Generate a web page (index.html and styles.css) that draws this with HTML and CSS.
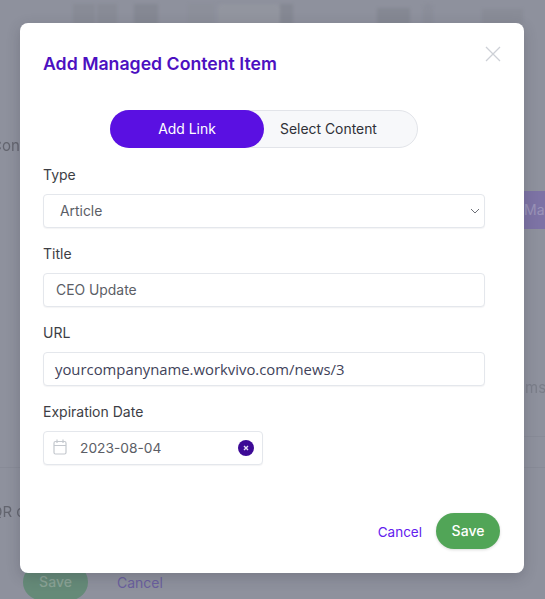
FILE: index.html
```html
<!DOCTYPE html>
<html lang="en">
<head>
<meta charset="utf-8">
<title>Add Managed Content Item</title>
<link rel="stylesheet" href="styles.css">
</head>
<body>
<div class="backdrop">
  <div class="ghost-top">
    <span class="g g1"></span><span class="g g2"></span><span class="g g3"></span><span class="g g4"></span><span class="g g5"></span><span class="g g6"></span><span class="g g7"></span><span class="g g8"></span><span class="g g9"></span>
  </div>
  <span class="bg-text bg-con">Con</span>
  <span class="bg-manage">Man</span>
  <span class="bg-text bg-ms">ms</span>
  <span class="bg-text bg-qr">QR c</span>
  <span class="bg-line bg-line1"></span>
  <span class="bg-line bg-line2"></span>
  <span class="bg-save">Save</span>
  <span class="bg-cancel">Cancel</span>
</div>
<main class="modal">
  <svg class="close" width="16" height="16" viewBox="0 0 16 16" aria-label="Close"><path d="M1 1l14 14M15 1L1 15"/></svg>
  <h1 class="title">Add Managed Content Item</h1>
  <div class="toggle">
    <div class="tab tab-on">Add Link</div>
    <div class="tab tab-off">Select Content</div>
  </div>
  <div class="field">
    <div class="label">Type</div>
    <div class="input select">
      <span>Article</span>
      <svg class="chev" width="10" height="6" viewBox="0 0 10 6"><path d="M1 1l4 4 4-4"/></svg>
    </div>
  </div>
  <div class="field">
    <div class="label">Title</div>
    <div class="input">CEO Update</div>
  </div>
  <div class="field">
    <div class="label">URL</div>
    <div class="input url">yourcompanyname.workvivo.com/news/3</div>
  </div>
  <div class="field">
    <div class="label">Expiration Date</div>
    <div class="input date">
      <svg class="cal" width="14" height="16" viewBox="0 0 14 16"><rect x="1" y="2.5" width="12" height="12.5" rx="1.5"/><path d="M1 6.5h12M4 .5v3.5M10 .5v3.5"/></svg>
      <span class="date-val">2023-08-04</span>
      <span class="clear"><svg width="6" height="6" viewBox="0 0 6 6"><path d="M1 1l4 4M5 1L1 5"/></svg></span>
    </div>
  </div>
  <div class="actions">
    <span class="cancel">Cancel</span>
    <span class="save">Save</span>
  </div>
</main>
</body>
</html>
```
FILE: styles.css
```css
* { box-sizing: border-box; }
html, body { margin: 0; height: 100%; }
body {
  width: 545px;
  height: 599px;
  overflow: hidden;
  position: relative;
  background: #8e919d;
  font-family: Inter, "Liberation Sans", sans-serif;
  font-size: 14px;
  color: #33343c;
}
.backdrop { position: absolute; inset: 0; overflow: hidden; }
.ghost-top { position: absolute; inset: 0; height: 24px; filter: blur(1.5px); }
.g { position: absolute; top: 4px; height: 20px; background: #888b96; }
.g1 { left: 73px; width: 22px; }
.g2 { left: 97px; width: 20px; }
.g3 { left: 134px; width: 24px; background: #858893; }
.g4 { left: 188px; width: 26px; background: #8c8f9a; }
.g5 { left: 218px; width: 62px; background: #92959f; border-radius: 4px 4px 0 0; }
.g6 { left: 280px; width: 13px; background: #858893; }
.g7 { left: 377px; width: 33px; top: 8px; height: 16px; background: #858893; }
.g8 { left: 423px; width: 10px; top: 4px; height: 20px; background: #8a8d99; border-radius: 6px 6px 0 0; }
.g9 { left: 482px; width: 41px; top: 9px; height: 15px; background: #898c97; }
.bg-text { position: absolute; color: #63656f; font-size: 15px; line-height: 18px; filter: blur(.4px); }
.bg-con { left: -9px; top: 137px; }
.bg-ms { left: 525px; top: 379px; color: #7b7e89; }
.bg-qr { left: -9px; top: 503px; }
.bg-manage {
  position: absolute; left: 500px; top: 191px; width: 60px; height: 38px;
  padding-left: 24px; background: #7d73a5; color: #9a93b8; font-size: 14px; line-height: 38px;
}
.bg-line { position: absolute; left: 0; right: 0; height: 1px; background: #888b97; }
.bg-line1 { top: 467px; }
.bg-line2 { top: 436px; left: 524px; }
.bg-save {
  position: absolute; left: 23px; top: 564px; width: 65px; height: 36px; border-radius: 18px;
  background: #658a78; color: #8aa395; font-size: 14px; font-weight: 500; line-height: 36px; text-align: center;
}
.bg-cancel { position: absolute; left: 117px; top: 574px; color: #6a5f9e; font-size: 14px; line-height: 18px; }
.modal {
  position: absolute;
  left: 20px; top: 23px;
  width: 504px; height: 550px;
  padding: 0 23px;
  background: #fff;
  border-radius: 8px;
  box-shadow: 0 4px 14px rgba(40, 42, 55, .22);
}
.close { position: absolute; right: 23px; top: 23px; fill: none; stroke: #cdd0d6; stroke-width: 1.3; }
.title {
  margin: 0; padding-top: 30px;
  font-size: 17.7px; line-height: 22px; font-weight: 600;
  color: #4c10c1;
}
.toggle {
  display: flex;
  width: 308px; height: 38px;
  margin: 35px 0 0 67px;
  background: #f7f8fa;
  border: 1px solid #e2e4e9;
  border-radius: 20px;
  font-size: 13.9px; font-weight: 400;
}
.tab { display: flex; align-items: center; justify-content: center; }
.tab-on {
  width: 154px; margin: -1px 0 -1px -1px;
  background: #5a10e2; color: #fff; border-radius: 20px;
}
.tab-off { flex: 1; padding-right: 24px; color: #2f3037; }
.field { margin-top: 17px; }
.toggle + .field { margin-top: 18px; }
.label { font-size: 14px; line-height: 18px; color: #3d3e45; }
.input {
  display: flex; align-items: center;
  width: 442px; height: 34px;
  margin-top: 10px;
  padding: 0 12px;
  background: #fff;
  border: 1px solid #e4e7ec;
  border-radius: 4px;
  box-shadow: 0 1px 1px rgba(30, 40, 60, .05);
  font-size: 13.9px;
  color: #5b5e66;
}
.select { justify-content: space-between; padding: 0 4px 0 16px; }
.chev { fill: none; stroke: #6d7078; stroke-width: 1; }
.url { padding-left: 11px; font-family: "Open Sans", sans-serif; font-size: 14.85px; color: #41435a; }
.date { width: 220px; padding: 0 8px 0 9px; }
.cal { fill: none; stroke: #c4c8ce; stroke-width: 1.2; flex: none; margin-bottom: 2px; }
.date-val { margin-left: 13px; flex: 1; font-size: 13.75px; }
.clear {
  display: flex; align-items: center; justify-content: center;
  width: 16px; height: 16px;
  background: #3d0a96; border-radius: 50%;
}
.clear svg { fill: none; stroke: #e6e0f5; stroke-width: 1.4; }
.actions {
  position: absolute; right: 24px; bottom: 24px;
  display: flex; align-items: center; gap: 14px;
}
.cancel { color: #6320ee; font-size: 13.5px; padding-top: 2px; }
.save {
  display: flex; align-items: center; justify-content: center;
  width: 64px; height: 36px;
  background: #51a557; color: #fff; border-radius: 18px;
  font-size: 14px; font-weight: 500;
  padding-bottom: 2px;
  box-shadow: 0 1px 3px rgba(0, 0, 0, .15);
}
```
